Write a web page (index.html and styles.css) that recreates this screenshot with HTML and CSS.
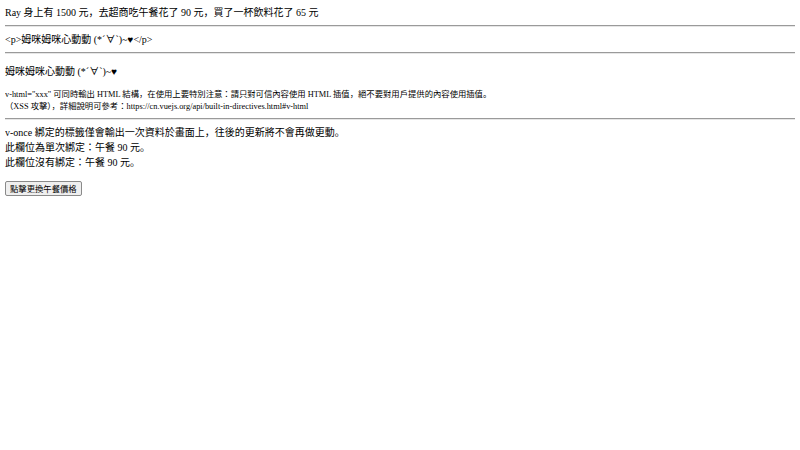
FILE: index.html
```html
<!DOCTYPE html>
<html>
<head>
<meta charset="utf-8">
<link rel="stylesheet" href="styles.css">
</head>
<body>
<div id="app">
Ray 身上有 1500 元，去超商吃午餐花了 90 元，買了一杯飲料花了 65 元
<hr class="rule">
&lt;p&gt;姆咪姆咪心動動 (*´∀`)~♥&lt;/p&gt;
<hr class="rule">
<p class="msg">姆咪姆咪心動動 (*´∀`)~♥</p>
<small class="note">v-html="xxx" 可同時輸出 HTML 結構，在使用上要特別注意：請只對可信內容使用 HTML 插值，絕不要對用戶提供的內容使用插值。<br>（XSS 攻擊），詳細說明可參考：https://cn.vuejs.org/api/built-in-directives.html#v-html</small>
<hr class="rule">
v-once 綁定的標籤僅會輸出一次資料於畫面上，往後的更新將不會再做更動。<br>
此欄位為單次綁定：午餐 90 元。<br>
此欄位沒有綁定：午餐 90 元。
<div class="actions">
<button class="btn">點擊更換午餐價格</button>
</div>
</div>
</body>
</html>
```

FILE: styles.css
```css
body {
  margin: 5px;
  font-family: "Liberation Serif", "Noto Sans CJK JP", serif;
  font-size: 10px;
  line-height: 15px;
  color: #000;
}
.rule {
  height: 0;
  border: 0;
  border-top: 1px solid #9a9a9a;
  border-bottom: 0.25px solid #e6e6e6;
  margin: 5px 0;
}
.msg {
  margin: 10px 0;
}
.note {
  display: block;
  font-size: 8.33px;
  line-height: 11.75px;
}
.actions {
  margin-top: 11.75px;
}
.btn {
  display: block;
  font-family: "Liberation Sans", "Noto Sans CJK JP", sans-serif;
  font-size: 8.33px;
  line-height: 12px;
  padding: 0.5px 4px;
  margin: 0;
  border: 1px solid #8a8a8a;
  border-radius: 2px;
  background: #efefef;
  color: #000;
}
```
